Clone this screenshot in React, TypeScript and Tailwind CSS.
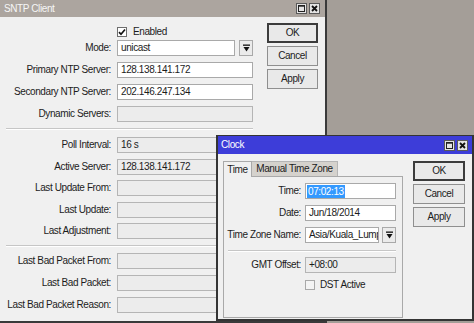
import React from 'react';

type FieldProps = {
    value?: React.ReactNode;
    disabled?: boolean;
    width?: string;
};

function Field({ value, disabled, width = 'w-[136px]' }: FieldProps) {
    return (
        <div
            className={`${width} h-[16px] flex items-center pl-[3px] border whitespace-nowrap overflow-hidden ${
                disabled ? 'bg-[#ececec] border-[#b5b5b5]' : 'bg-white border-[#a9a9a9]'
            }`}
        >
            {value}
        </div>
    );
}

function DropButton() {
    return (
        <div className="w-[14px] h-[16px] flex items-center justify-center border border-[#a9a9a9] bg-[#ebebeb]">
            <svg width="7" height="8" viewBox="0 0 7 8">
                <rect x="0" y="0.5" width="7" height="1.3" fill="#111" />
                <path d="M0.5 3h6L3.5 7.5z" fill="#111" />
            </svg>
        </div>
    );
}

function Row({ label, labelW, gap, children }: { label: string; labelW: string; gap: string; children: React.ReactNode }) {
    return (
        <div className={`flex items-center h-[16px] ${gap}`}>
            <div className={`${labelW} text-right whitespace-nowrap`}>{label}</div>
            {children}
        </div>
    );
}

function Separator({ className }: { className: string }) {
    return <div className={`h-[2px] border-t border-b border-t-[#c6c6c6] border-b-white ${className}`} />;
}

function WinButton({ label, primary }: { label: string; primary?: boolean }) {
    return (
        <div
            className={`h-[20px] flex items-center justify-center bg-[#e9e9e9] ${
                primary ? 'border-2 border-[#3c3c3c]' : 'border border-[#8f8f8f]'
            }`}
        >
            {label}
        </div>
    );
}

function TitleButtons() {
    return (
        <div className="flex gap-[2px]">
            <div className="w-[11px] h-[11px] flex items-center justify-center bg-[#e4e4e4] border border-[#5a5a5a]">
                <svg width="7" height="7" viewBox="0 0 7 7">
                    <rect x="0.5" y="0.5" width="6" height="6" fill="none" stroke="#222" strokeWidth="1" />
                    <rect x="0.5" y="0.5" width="6" height="1.2" fill="#222" />
                </svg>
            </div>
            <div className="w-[11px] h-[11px] flex items-center justify-center bg-[#e4e4e4] border border-[#5a5a5a]">
                <svg width="7" height="7" viewBox="0 0 7 7">
                    <path d="M1 1L6 6M6 1L1 6" stroke="#111" strokeWidth="1.8" />
                </svg>
            </div>
        </div>
    );
}

function Checkbox({ checked }: { checked?: boolean }) {
    return (
        <div
            className={`w-[10px] h-[10px] flex items-center justify-center border ${
                checked ? 'bg-white border-[#6e6e6e]' : 'bg-[#f4f4f4] border-[#a9a9a9]'
            }`}
        >
            {checked && (
                <svg width="8" height="8" viewBox="0 0 8 8">
                    <path d="M1 4.2L3 6.3L7 1.5" fill="none" stroke="#111" strokeWidth="1.7" />
                </svg>
            )}
        </div>
    );
}

function SntpWindow() {
    const L = 'w-[111px]';
    const G = 'gap-[6px]';
    return (
        <div className="absolute left-0 top-0 w-[327px] h-[323px] flex flex-col bg-[#f0f0f0] border-r-2 border-b-2 border-[#3a3a3a]">
            <div className="h-[17px] shrink-0 flex items-center justify-between pl-[4px] pr-[5px] bg-[#aca59f] text-[#f6f6f6]">
                <span>SNTP Client</span>
                <TitleButtons />
            </div>
            <div className="flex">
                <div className="w-[253px] flex flex-col pt-[7px]">
                    <div className="flex items-center h-[16px] gap-[6px]">
                        <div className="w-[111px]" />
                        <Checkbox checked />
                        <span>Enabled</span>
                    </div>
                    <Row label="Mode:" labelW={L} gap={G}>
                        <div className="flex gap-[4px]">
                            <Field value="unicast" width="w-[118px]" />
                            <DropButton />
                        </div>
                    </Row>
                    <div className="flex flex-col gap-[6px] mt-[6px]">
                        <Row label="Primary NTP Server:" labelW={L} gap={G}>
                            <Field value="128.138.141.172" />
                        </Row>
                        <Row label="Secondary NTP Server:" labelW={L} gap={G}>
                            <Field value="202.146.247.134" />
                        </Row>
                        <Row label="Dynamic Servers:" labelW={L} gap={G}>
                            <Field disabled />
                        </Row>
                    </div>
                    <Separator className="mt-[6px] ml-[6px]" />
                    <div className="flex flex-col gap-[5.5px] mt-[7px]">
                        <Row label="Poll Interval:" labelW={L} gap={G}>
                            <Field value="16 s" disabled />
                        </Row>
                        <Row label="Active Server:" labelW={L} gap={G}>
                            <Field value="128.138.141.172" disabled />
                        </Row>
                        <Row label="Last Update From:" labelW={L} gap={G}>
                            <Field disabled />
                        </Row>
                        <Row label="Last Update:" labelW={L} gap={G}>
                            <Field disabled />
                        </Row>
                        <Row label="Last Adjustment:" labelW={L} gap={G}>
                            <Field disabled />
                        </Row>
                    </div>
                    <Separator className="mt-[6px] ml-[6px]" />
                    <div className="flex flex-col gap-[6px] mt-[6px]">
                        <Row label="Last Bad Packet From:" labelW={L} gap={G}>
                            <Field disabled />
                        </Row>
                        <Row label="Last Bad Packet:" labelW={L} gap={G}>
                            <Field disabled />
                        </Row>
                        <Row label="Last Bad Packet Reason:" labelW={L} gap={G}>
                            <Field disabled />
                        </Row>
                    </div>
                </div>
                <div className="w-[51px] ml-[14px] pt-[6px] flex flex-col gap-[3px]">
                    <WinButton label="OK" primary />
                    <WinButton label="Cancel" />
                    <WinButton label="Apply" />
                </div>
            </div>
        </div>
    );
}

function ClockWindow() {
    const L = 'w-[77px]';
    const G = 'gap-[4px]';
    return (
        <div className="absolute left-[216px] top-[135px] w-[258px] h-[186px] flex flex-col bg-[#f0f0f0] border-2 border-t border-[#343434]">
            <div className="h-[18px] shrink-0 flex items-center justify-between pl-[3px] pr-[4px] bg-[#3d3dd9] text-white">
                <span>Clock</span>
                <TitleButtons />
            </div>
            <div className="flex pl-[5px] pt-[7px]">
                <div className="w-[180px] flex flex-col">
                    <div className="flex items-end h-[15px]">
                        <div className="relative z-10 w-[29px] h-[16px] -mb-px flex items-center justify-center bg-[#f0f0f0] border border-b-0 border-[#a9a9a9]">
                            Time
                        </div>
                        <div className="w-[86px] h-[15px] flex items-center justify-center bg-[#d5d2cd] border-t border-r border-[#b5b5b5]">
                            Manual Time Zone
                        </div>
                    </div>
                    <div className="h-[142px] flex flex-col pt-[6px] border border-[#a9a9a9]">
                        <div className="flex flex-col gap-[6px]">
                            <Row label="Time:" labelW={L} gap={G}>
                                <div className="w-[91px] h-[16px] flex items-center pl-[1px] bg-white border border-[#a9a9a9]">
                                    <span className="bg-[#3399ff] text-white pl-[1px] pr-[1px] leading-[13px]">07:02:13</span>
                                </div>
                            </Row>
                            <Row label="Date:" labelW={L} gap={G}>
                                <Field value="Jun/18/2014" width="w-[91px]" />
                            </Row>
                            <Row label="Time Zone Name:" labelW={L} gap={G}>
                                <div className="flex gap-[3px]">
                                    <Field value="Asia/Kuala_Lumpur" width="w-[74px]" />
                                    <DropButton />
                                </div>
                            </Row>
                        </div>
                        <Separator className="mt-[7px] ml-[4px] mr-[6px]" />
                        <div className="mt-[5px]">
                            <Row label="GMT Offset:" labelW={L} gap={G}>
                                <Field value="+08:00" width="w-[91px]" disabled />
                            </Row>
                        </div>
                        <div className="flex items-center h-[12px] mt-[6px] gap-[5px]">
                            <div className="w-[77px] mr-[-1px]" />
                            <Checkbox />
                            <span>DST Active</span>
                        </div>
                    </div>
                </div>
                <div className="w-[52px] ml-[10px] flex flex-col gap-[3px]">
                    <WinButton label="OK" primary />
                    <WinButton label="Cancel" />
                    <WinButton label="Apply" />
                </div>
            </div>
        </div>
    );
}

export default function App() {
    return (
        <div className="relative w-[474px] h-[323px] overflow-hidden bg-[#a49e98] text-[#1c1c1c] text-[10px] tracking-[-0.4px] leading-none font-['Liberation_Sans',Arial,sans-serif]">
            <SntpWindow />
            <ClockWindow />
        </div>
    );
}
